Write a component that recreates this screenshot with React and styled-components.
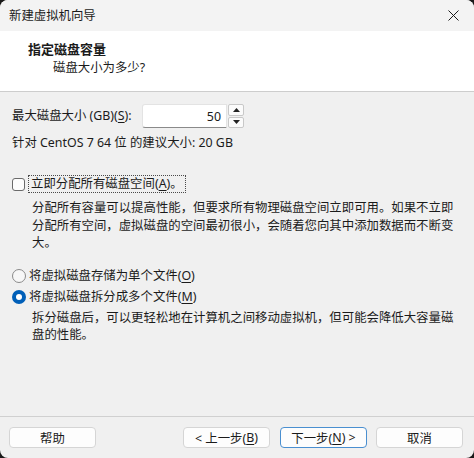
import React from "react";
import styled, { createGlobalStyle } from "styled-components";

const Global = createGlobalStyle`
  html, body { margin: 0; padding: 0; background: #1a1a1a; }
  body { width: 474px; height: 458px; overflow: hidden; }
  * { box-sizing: border-box; }
`;

const FONT = `"Segoe UI", "Noto Sans", "Noto Sans CJK SC", sans-serif`;

const Window = styled.div`
  width: 474px;
  height: 458px;
  border-radius: 8px;
  overflow: hidden;
  background: #f0f0f0;
  display: flex;
  flex-direction: column;
  font-family: ${FONT};
  font-size: 12.4px;
  color: #1b1b1b;
`;

const TitleBar = styled.div`
  height: 31px;
  flex: none;
  background: #f3f3f3;
  display: flex;
  align-items: center;
  justify-content: space-between;
  padding: 0 15px 0 9px;
`;

const TitleText = styled.span`
  font-size: 12.4px;
  line-height: 16px;
  color: #1b1b1b;
`;

const Header = styled.div`
  height: 61px;
  flex: none;
  background: #ffffff;
  border-bottom: 1px solid #cdcdcd;
  display: flex;
  flex-direction: column;
  padding-top: 9px;
`;

const HeaderTitle = styled.div`
  font-weight: bold;
  font-size: 13px;
  line-height: 18px;
  padding-left: 28px;
`;

const HeaderSub = styled.div`
  line-height: 18px;
  margin-top: 1px;
  padding-left: 53px;
`;

const Body = styled.div`
  flex: 1;
  display: flex;
  flex-direction: column;
  padding: 0 0 0 12px;
`;

const Row = styled.div`
  display: flex;
  align-items: center;
  height: ${(p) => p.$h || 18}px;
  margin-top: ${(p) => p.$mt || 0}px;
  margin-left: ${(p) => p.$ml || 0}px;
`;

const Label = styled.span`
  width: ${(p) => (p.$w ? `${p.$w}px` : "auto")};
  line-height: 18px;
  white-space: nowrap;
`;

const U = styled.span`
  text-decoration: underline;
  text-underline-offset: 2px;
`;

const NumField = styled.div`
  width: 85px;
  height: 24px;
  background: #ffffff;
  border: 1px solid #e3e3e3;
  border-bottom: 1px solid #8a8a8a;
  border-radius: 3px 0 0 3px;
  display: flex;
  align-items: center;
  justify-content: flex-end;
  padding-right: 5px;
  font-size: 12.4px;
`;

const Spin = styled.div`
  width: 16px;
  height: 24px;
  margin-left: 1px;
  display: flex;
  flex-direction: column;
  gap: 1px;
`;

const SpinBtn = styled.div`
  flex: 1;
  background: #fbfbfb;
  border: 1px solid #c8c8c8;
  border-radius: 2px;
  display: flex;
  align-items: center;
  justify-content: center;
`;

const Box = styled.span`
  width: 13px;
  height: 13px;
  border: 1px solid #6a6a6a;
  border-radius: 3px;
  background: #fdfdfd;
  flex: none;
`;

const FocusLabel = styled.span`
  margin-left: 3px;
  padding: 0 2px;
  border: 1px dotted #4a4a4a;
  line-height: 16px;
  height: 18px;
  display: flex;
  align-items: center;
  white-space: nowrap;
`;

const Radio = styled.span`
  width: 14px;
  height: 14px;
  border-radius: 50%;
  flex: none;
  border: ${(p) => (p.$on ? "none" : "1px solid #8a8a8a")};
  background: ${(p) => (p.$on ? "#005fb8" : "#f7f7f7")};
  display: flex;
  align-items: center;
  justify-content: center;
  &::after {
    content: "";
    display: ${(p) => (p.$on ? "block" : "none")};
    width: 6px;
    height: 6px;
    border-radius: 50%;
    background: #ffffff;
  }
`;

const RadioText = styled.span`
  margin-left: 3px;
  line-height: 18px;
  white-space: nowrap;
`;

const Desc = styled.div`
  margin-top: ${(p) => p.$mt || 0}px;
  padding-left: 20px;
  padding-right: 14px;
  line-height: 17.5px;
`;

const Footer = styled.div`
  margin-top: auto;
  border-top: 1px solid #d0d0d0;
  height: 42px;
  flex: none;
  display: flex;
  align-items: flex-start;
  padding: 10px 11px 0 9px;
`;

const Button = styled.div`
  width: 87px;
  height: 21px;
  background: #fdfdfd;
  border: 1px solid ${(p) => (p.$primary ? "#4a8fd0" : "#d5d5d5")};
  border-radius: 4px;
  display: flex;
  align-items: center;
  justify-content: center;
  margin-left: ${(p) => p.$ml || 0}px;
  white-space: nowrap;
  font-size: 12.4px;
`;

const Spacer = styled.div`
  flex: 1;
`;

export default function App() {
  return (
    <>
      <Global />
      <Window>
        <TitleBar>
          <TitleText>新建虚拟机向导</TitleText>
          <svg width="11" height="11" viewBox="0 0 11 11">
            <path d="M0.5 0.5 L10.5 10.5 M10.5 0.5 L0.5 10.5" stroke="#1b1b1b" strokeWidth="1" />
          </svg>
        </TitleBar>
        <Header>
          <HeaderTitle>指定磁盘容量</HeaderTitle>
          <HeaderSub>磁盘大小为多少?</HeaderSub>
        </Header>
        <Body>
          <Row $h={24} $mt={12}>
            <Label $w={130}>
              最大磁盘大小 (GB)(<U>S</U>):
            </Label>
            <NumField>50</NumField>
            <Spin>
              <SpinBtn>
                <svg width="7" height="4" viewBox="0 0 7 4">
                  <path d="M0 4 L3.5 0 L7 4 Z" fill="#222" />
                </svg>
              </SpinBtn>
              <SpinBtn>
                <svg width="7" height="4" viewBox="0 0 7 4">
                  <path d="M0 0 L3.5 4 L7 0 Z" fill="#222" />
                </svg>
              </SpinBtn>
            </Spin>
          </Row>
          <Row $mt={6}>
            <Label>针对 CentOS 7 64 位 的建议大小: 20 GB</Label>
          </Row>
          <Row $mt={23}>
            <Box />
            <FocusLabel>
              立即分配所有磁盘空间(<U>A</U>)。
            </FocusLabel>
          </Row>
          <Desc $mt={6}>
            分配所有容量可以提高性能，但要求所有物理磁盘空间立即可用。如果不立即分配所有空间，虚拟磁盘的空间最初很小，会随着您向其中添加数据而不断变大。
          </Desc>
          <Row $h={20} $mt={14}>
            <Radio />
            <RadioText>
              将虚拟磁盘存储为单个文件(<U>O</U>)
            </RadioText>
          </Row>
          <Row $h={20} $mt={1}>
            <Radio $on />
            <RadioText>
              将虚拟磁盘拆分成多个文件(<U>M</U>)
            </RadioText>
          </Row>
          <Desc $mt={2}>
            拆分磁盘后，可以更轻松地在计算机之间移动虚拟机，但可能会降低大容量磁盘的性能。
          </Desc>
        </Body>
        <Footer>
          <Button>帮助</Button>
          <Spacer />
          <Button>
            &lt; 上一步(<U>B</U>)
          </Button>
          <Button $primary $ml={10}>
            下一步(<U>N</U>) &gt;
          </Button>
          <Button $ml={9}>取消</Button>
        </Footer>
      </Window>
    </>
  );
}
